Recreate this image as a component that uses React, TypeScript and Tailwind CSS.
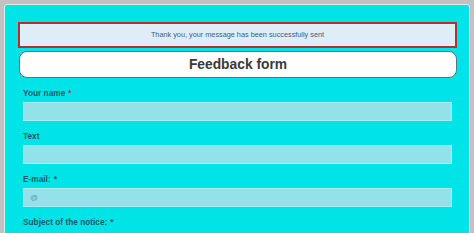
import React from "react";

const font = { fontFamily: '"Liberation Sans", Arial, sans-serif' };

function Label({ label, req, reqColor }: { label: string; req?: boolean; reqColor?: string }) {
  return (
    <div className="h-[24px] flex items-end pb-[5px] text-[8.3px] font-bold text-[#1f5966] leading-none">
      <span>{label}</span>
      {req && <span className={`ml-[3px] ${reqColor ?? "text-[#1f5966]"}`}>*</span>}
    </div>
  );
}

function Field({ label, req, reqColor, placeholder }: { label: string; req?: boolean; reqColor?: string; placeholder?: string }) {
  return (
    <div className="flex flex-col">
      <Label label={label} req={req} reqColor={reqColor} />
      <div className="h-[19px] bg-[#94e2e9] border border-[#a8ecef] flex items-center pl-[6px] text-[8px] text-[#5f9aa2]">
        {placeholder}
      </div>
    </div>
  );
}

export default function App() {
  return (
    <div className="w-[474px] h-[233px] overflow-hidden bg-[#c2c2c2] pt-[4px] pl-[4px] pr-[4px]" style={font}>
      <div className="h-[240px] bg-[#00e4e7] border border-[#d6eeee] rounded-t-[3px] pl-[13px] pr-[12px] pt-[17px]">
        <div className="h-[26px] border-2 border-[#b3312b] bg-[#dfedf9] flex items-center justify-center text-[7.3px] text-[#3d5f7e]">
          Thank you, your message has been successfully sent
        </div>
        <div className="mt-[3px] ml-[1px] h-[27px] bg-white rounded-[8px] border border-[#6a7070] flex items-center justify-center pt-[1px] text-[13.8px] font-bold text-[#3a3a3a]">
          Feedback form
        </div>
        <div className="pl-[5px] pr-[5px] flex flex-col">
          <Field label="Your name" req reqColor="text-[#d8246c]" />
          <Field label="Text" />
          <Field label="E-mail:" req placeholder="@" />
          <Label label="Subject of the notice:" req />
        </div>
      </div>
    </div>
  );
}
